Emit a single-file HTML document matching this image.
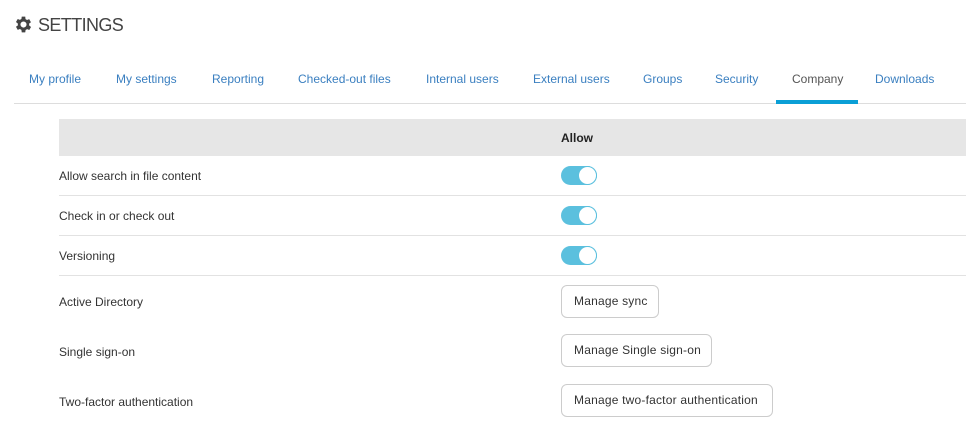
<!DOCTYPE html>
<html><head><style>
body{margin:0;width:966px;height:426px;background:#fff;font-family:"Liberation Sans",sans-serif;position:relative;overflow:hidden;color:#333}
.a{position:absolute;white-space:nowrap}
.tab{position:absolute;top:72px;font-size:12px;color:#3a7fc0}
.lbl{position:absolute;left:59px;font-size:12px;color:#333}
.hr{position:absolute;left:59px;right:0;height:1px;background:#e2e2e2}
.tg{position:absolute;left:561px;width:36px;height:19px;border-radius:10px;background:#5bc0de}
.tg::after{content:"";position:absolute;right:0;top:0;width:17px;height:17px;border-radius:50%;background:#fff;border:1px solid #5bc0de}
.btn{position:absolute;left:561px;height:33px;border:1px solid #ccc;border-radius:6px;font-size:12px;color:#333;line-height:31px;padding:0 12px;box-sizing:border-box;letter-spacing:0.2px;white-space:nowrap}
</style></head><body>
<svg class="a" style="left:13px;top:14px" width="21" height="21" viewBox="0 0 24 24"><path fill="#444" d="M19.4 13a7.5 7.5 0 0 0 0-2l2.1-1.6-2-3.5-2.5 1a7 7 0 0 0-1.7-1L15 3h-4l-.4 2.7a7 7 0 0 0-1.7 1l-2.5-1-2 3.5L6.6 11a7.5 7.5 0 0 0 0 2l-2.2 1.6 2 3.5 2.5-1a7 7 0 0 0 1.7 1L11 21h4l.4-2.7a7 7 0 0 0 1.7-1l2.5 1 2-3.5zM13 15.5a3.5 3.5 0 1 1 0-7 3.5 3.5 0 0 1 0 7z" transform="translate(-1 0)"/></svg>
<div class="a" style="left:38px;top:15px;font-size:18px;color:#444;letter-spacing:-0.6px">SETTINGS</div>
<div class="tab" style="left:29px">My profile</div>
<div class="tab" style="left:116px">My settings</div>
<div class="tab" style="left:212px">Reporting</div>
<div class="tab" style="left:298px">Checked-out files</div>
<div class="tab" style="left:426px">Internal users</div>
<div class="tab" style="left:533px">External users</div>
<div class="tab" style="left:643px">Groups</div>
<div class="tab" style="left:715px">Security</div>
<div class="tab" style="left:792px;color:#555">Company</div>
<div class="tab" style="left:875px">Downloads</div>
<div class="a" style="left:14px;right:0;top:103px;height:1px;background:#ddd"></div>
<div class="a" style="left:776px;width:82px;top:100px;height:4px;background:#0a9fd6"></div>
<div class="a" style="left:59px;right:0;top:119px;height:37px;background:#e6e6e6"></div>
<div class="a" style="left:561px;top:131px;font-size:12px;font-weight:bold;color:#222">Allow</div>
<div class="lbl" style="top:169px">Allow search in file content</div><div class="tg" style="top:166px"></div><div class="hr" style="top:195px"></div>
<div class="lbl" style="top:209px">Check in or check out</div><div class="tg" style="top:206px"></div><div class="hr" style="top:235px"></div>
<div class="lbl" style="top:249px">Versioning</div><div class="tg" style="top:246px"></div><div class="hr" style="top:275px"></div>
<div class="lbl" style="top:295px">Active Directory</div><div class="btn" style="top:285px;width:98px">Manage sync</div>
<div class="lbl" style="top:345px">Single sign-on</div><div class="btn" style="top:334px;width:151px">Manage Single sign-on</div>
<div class="lbl" style="top:395px">Two-factor authentication</div><div class="btn" style="top:384px;width:212px">Manage two-factor authentication</div>
</body></html>
